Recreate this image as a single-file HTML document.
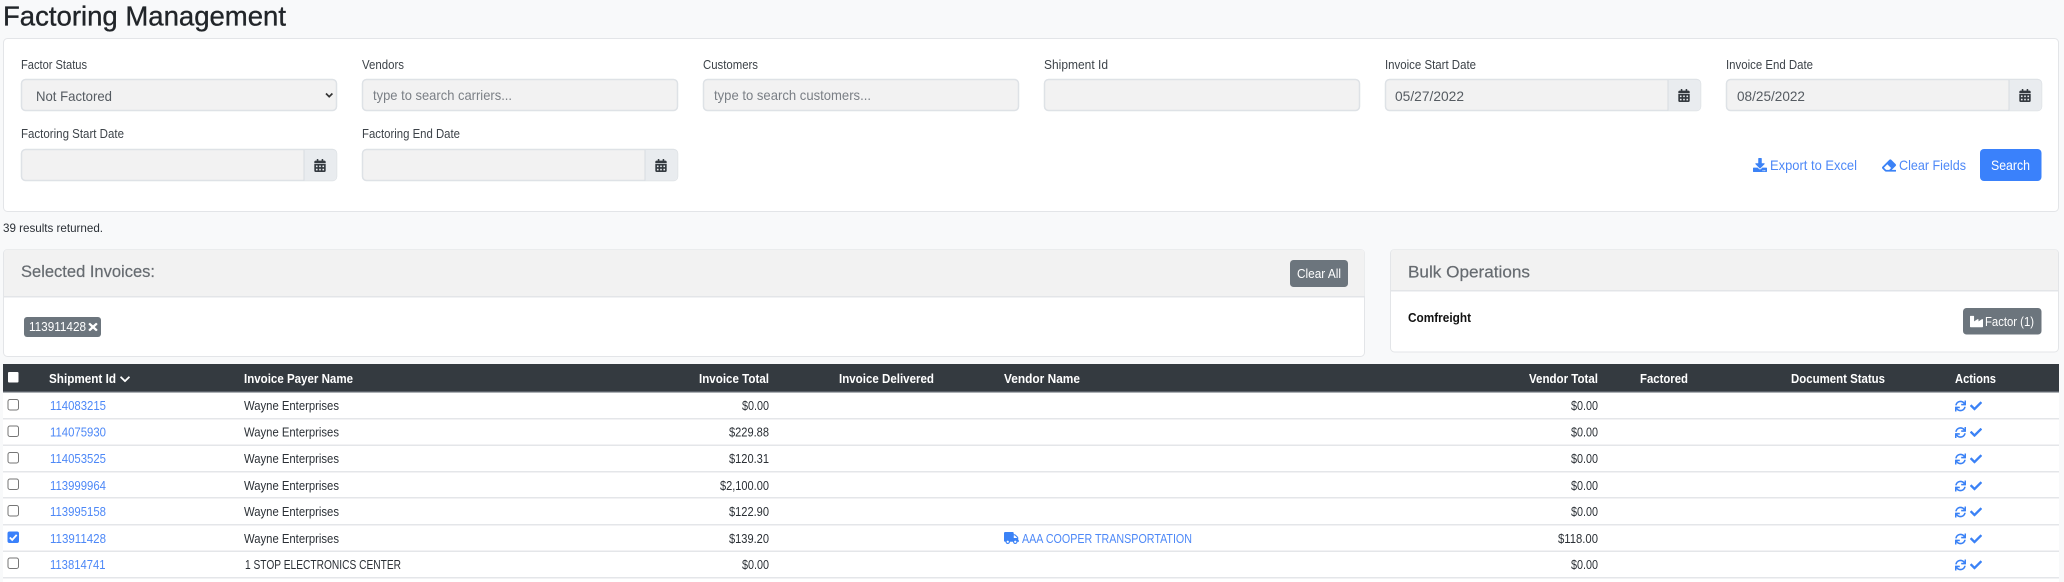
<!DOCTYPE html>
<html lang="en"><head><meta charset="utf-8"><title>Factoring Management</title>
<style>
html,body{margin:0;padding:0;width:2064px;height:582px;overflow:hidden;background:#f8f9fa}
svg{display:block}
text{font-family:"Liberation Sans",sans-serif;font-size:12.8px;fill:#2b3036}
.lb{fill:#3d4349}
.ph{fill:#7a7f85;font-size:14px}
.v{fill:#555b61;font-size:14px}
.h{fill:#fff;font-weight:bold;font-size:12.6px}
.a{fill:#4d88f7}
.ct{fill:#666b70;font-size:17px;stroke:#666b70;stroke-width:.2px}
.w{fill:#fff}
.in{fill:#f2f2f2;stroke:#dee2e6;stroke-width:1.5}
.ad{fill:#e9ecef}
.ln{fill:#e4e6e9}
.cb{fill:#fff;stroke:#767676;stroke-width:1}
</style></head><body>
<svg width="2064" height="582" viewBox="0 0 2064 582" xmlns="http://www.w3.org/2000/svg">
<defs>
<symbol id="cal" viewBox="0 0 448 512"><path fill="#343a40" d="M0 464c0 26.5 21.5 48 48 48h352c26.5 0 48-21.5 48-48V192H0v272zm320-196c0-6.6 5.4-12 12-12h40c6.6 0 12 5.4 12 12v40c0 6.6-5.4 12-12 12h-40c-6.6 0-12-5.4-12-12v-40zm0 128c0-6.6 5.4-12 12-12h40c6.6 0 12 5.4 12 12v40c0 6.6-5.4 12-12 12h-40c-6.6 0-12-5.4-12-12v-40zM192 268c0-6.6 5.4-12 12-12h40c6.6 0 12 5.4 12 12v40c0 6.6-5.4 12-12 12h-40c-6.6 0-12-5.4-12-12v-40zm0 128c0-6.6 5.4-12 12-12h40c6.6 0 12 5.4 12 12v40c0 6.6-5.4 12-12 12h-40c-6.6 0-12-5.4-12-12v-40zM64 268c0-6.6 5.4-12 12-12h40c6.6 0 12 5.4 12 12v40c0 6.6-5.4 12-12 12H76c-6.6 0-12-5.4-12-12v-40zm0 128c0-6.6 5.4-12 12-12h40c6.6 0 12 5.4 12 12v40c0 6.6-5.4 12-12 12H76c-6.6 0-12-5.4-12-12v-40zM400 64h-48V16c0-8.8-7.2-16-16-16h-32c-8.8 0-16 7.2-16 16v48H160V16c0-8.8-7.2-16-16-16h-32c-8.8 0-16 7.2-16 16v48H48C21.5 64 0 85.5 0 112v48h448v-48c0-26.5-21.5-48-48-48z"/></symbol>
<symbol id="sync" viewBox="0 0 512 512"><path fill="#3b82f6" d="M440.65 12.57l4 82.77A247.16 247.16 0 0 0 255.83 8C134.73 8 33.91 94.92 12.29 209.82A12 12 0 0 0 24.09 224h49.05a12 12 0 0 0 11.67-9.26 175.91 175.91 0 0 1 317-56.94l-101.46-4.86a12 12 0 0 0-12.57 12v47.41a12 12 0 0 0 12 12H500a12 12 0 0 0 12-12V12a12 12 0 0 0-12-12h-47.37a12 12 0 0 0-11.98 12.57zM255.83 432a175.61 175.61 0 0 1-146-77.8l101.8 4.87a12 12 0 0 0 12.57-12v-47.4a12 12 0 0 0-12-12H12a12 12 0 0 0-12 12V500a12 12 0 0 0 12 12h47.35a12 12 0 0 0 12-12.6l-4.15-82.57A247.17 247.17 0 0 0 255.83 504c121.11 0 221.93-86.92 243.55-201.82a12 12 0 0 0-11.8-14.18h-49.05a12 12 0 0 0-11.67 9.26A175.86 175.86 0 0 1 255.83 432z"/></symbol>
<symbol id="chk" viewBox="0 0 512 512"><path fill="#3b82f6" d="M173.898 439.404l-166.4-166.4c-9.997-9.997-9.997-26.206 0-36.204l36.203-36.204c9.997-9.998 26.207-9.998 36.204 0L192 312.69 432.095 72.596c9.997-9.997 26.207-9.997 36.204 0l36.203 36.204c9.997 9.997 9.997 26.206 0 36.204l-294.4 294.401c-9.998 9.997-26.207 9.997-36.204-.001z"/></symbol>
<symbol id="acts" viewBox="0 0 27 12"><use href="#sync" x="0" y="0.500" width="11" height="11"/><use href="#chk" x="15" y="0" width="12" height="12"/></symbol>
</defs>

<!-- title -->
<text x="3" y="25.500" style="font-size:28px;fill:#212529;stroke:#212529;stroke-width:.35px" textLength="283" lengthAdjust="spacingAndGlyphs">Factoring Management</text>

<!-- filter card -->
<rect x="3.500" y="38.500" width="2055" height="173" rx="4" fill="#fff" stroke="#e3e5e8"/>

<text class="lb" x="21" y="69" textLength="66" lengthAdjust="spacingAndGlyphs">Factor Status</text>
<text class="lb" x="362" y="69" textLength="42" lengthAdjust="spacingAndGlyphs">Vendors</text>
<text class="lb" x="703" y="69" textLength="55" lengthAdjust="spacingAndGlyphs">Customers</text>
<text class="lb" x="1044" y="69" textLength="64" lengthAdjust="spacingAndGlyphs">Shipment Id</text>
<text class="lb" x="1385" y="69" textLength="91" lengthAdjust="spacingAndGlyphs">Invoice Start Date</text>
<text class="lb" x="1726" y="69" textLength="87" lengthAdjust="spacingAndGlyphs">Invoice End Date</text>
<text class="lb" x="21" y="138" textLength="103" lengthAdjust="spacingAndGlyphs">Factoring Start Date</text>
<text class="lb" x="362" y="138" textLength="98" lengthAdjust="spacingAndGlyphs">Factoring End Date</text>

<rect class="in" x="21.500" y="79.500" width="315" height="31" rx="4"/>
<text class="v" x="36" y="101" textLength="76" lengthAdjust="spacingAndGlyphs">Not Factored</text>
<path d="M326 93.500l3.200 3.200 3.200-3.200" fill="none" stroke="#333" stroke-width="1.700"/>

<rect class="in" x="362.500" y="79.500" width="315" height="31" rx="4"/>
<text class="ph" x="373" y="100" textLength="139" lengthAdjust="spacingAndGlyphs">type to search carriers...</text>
<rect class="in" x="703.500" y="79.500" width="315" height="31" rx="4"/>
<text class="ph" x="714" y="100" textLength="157" lengthAdjust="spacingAndGlyphs">type to search customers...</text>
<rect class="in" x="1044.500" y="79.500" width="315" height="31" rx="4"/>

<!-- date inputs row 1 -->
<rect class="in" x="1385.500" y="79.500" width="315" height="31" rx="4"/>
<path class="ad" d="M1668 80h29a3.500 3.500 0 0 1 3.500 3.500v23.500a3.500 3.500 0 0 1-3.500 3.500h-29z"/>
<rect x="1667.500" y="80" width="1" height="30.500" fill="#d8dce0"/>
<text class="v" x="1395" y="101" textLength="69" lengthAdjust="spacingAndGlyphs">05/27/2022</text>
<use href="#cal" x="1678" y="89" width="12" height="13"/>

<rect class="in" x="1726.500" y="79.500" width="315" height="31" rx="4"/>
<path class="ad" d="M2009 80h29a3.500 3.500 0 0 1 3.500 3.500v23.500a3.500 3.500 0 0 1-3.500 3.500h-29z"/>
<rect x="2008.500" y="80" width="1" height="30.500" fill="#d8dce0"/>
<text class="v" x="1737" y="101" textLength="68" lengthAdjust="spacingAndGlyphs">08/25/2022</text>
<use href="#cal" x="2019" y="89" width="12" height="13"/>

<!-- date inputs row 2 -->
<rect class="in" x="21.500" y="149.500" width="315" height="31" rx="4"/>
<path class="ad" d="M304 150h29a3.500 3.500 0 0 1 3.500 3.500v23.500a3.500 3.500 0 0 1-3.500 3.500h-29z"/>
<rect x="303.500" y="150" width="1" height="30.500" fill="#d8dce0"/>
<use href="#cal" x="314" y="159" width="12" height="13"/>

<rect class="in" x="362.500" y="149.500" width="315" height="31" rx="4"/>
<path class="ad" d="M645 150h29a3.500 3.500 0 0 1 3.500 3.500v23.500a3.500 3.500 0 0 1-3.500 3.500h-29z"/>
<rect x="644.500" y="150" width="1" height="30.500" fill="#d8dce0"/>
<use href="#cal" x="655" y="159" width="12" height="13"/>

<!-- actions -->
<svg x="1753" y="158" width="14" height="14" viewBox="0 0 512 512"><path fill="#3b82f6" d="M216 0h80c13.300 0 24 10.700 24 24v168h87.700c17.800 0 26.700 21.500 14.100 34.100L269.700 378.300c-7.500 7.500-19.800 7.500-27.300 0L90.100 226.100c-12.600-12.600-3.700-34.100 14.100-34.100H192V24c0-13.300 10.700-24 24-24zm296 376v112c0 13.300-10.700 24-24 24H24c-13.300 0-24-10.700-24-24V376c0-13.300 10.700-24 24-24h146.700l49 49c20.100 20.100 52.500 20.100 72.600 0l49-49H488c13.300 0 24 10.700 24 24zm-124 88c0-11-9-20-20-20s-20 9-20 20 9 20 20 20 20-9 20-20zm64 0c0-11-9-20-20-20s-20 9-20 20 9 20 20 20 20-9 20-20z"/></svg>
<text class="a" x="1770" y="170" style="font-size:14px" textLength="87" lengthAdjust="spacingAndGlyphs">Export to Excel</text>
<svg x="1882" y="158.500" width="14" height="14" viewBox="0 0 512 512"><path fill="#3b82f6" d="M497.941 273.941c18.745-18.745 18.745-49.137 0-67.882l-160-160c-18.745-18.745-49.136-18.746-67.883 0l-256 256c-18.745 18.745-18.745 49.137 0 67.882l96 96A48.004 48.004 0 0 0 144 480h356c6.627 0 12-5.373 12-12v-40c0-6.627-5.373-12-12-12H355.883l142.058-142.059zm-302.627-62.627l137.373 137.373L265.373 416H150.628l-80-80 124.686-124.686z"/></svg>
<text class="a" x="1899" y="170" style="font-size:14px" textLength="67" lengthAdjust="spacingAndGlyphs">Clear Fields</text>
<rect x="1980" y="149" width="61.500" height="32" rx="4" fill="#3a81fb"/>
<text class="w" x="1991" y="170" style="font-size:14px" textLength="39" lengthAdjust="spacingAndGlyphs">Search</text>

<text x="3" y="232" style="font-size:12px" textLength="100" lengthAdjust="spacingAndGlyphs">39 results returned.</text>

<!-- selected invoices card -->
<rect x="3.500" y="249.500" width="1361" height="107" rx="4" fill="#fff" stroke="#e3e5e8"/>
<path d="M4 296.500V253a3.500 3.500 0 0 1 3.500-3.500h1353.500a3.500 3.500 0 0 1 3.500 3.500v43.500z" fill="#f2f2f2"/>
<rect x="4" y="296" width="1360.500" height="1.500" fill="#e3e5e8"/>
<text class="ct" x="21" y="277" textLength="134" lengthAdjust="spacingAndGlyphs">Selected Invoices:</text>
<rect x="1290" y="260" width="58" height="27" rx="3.500" fill="#6c757d"/>
<text class="w" x="1297" y="278" textLength="44" lengthAdjust="spacingAndGlyphs">Clear All</text>
<rect x="24" y="317" width="77" height="20" rx="3" fill="#6c757d"/>
<text class="w" x="29" y="331" textLength="57" lengthAdjust="spacingAndGlyphs">113911428</text>
<svg x="88.500" y="321" width="9" height="12" viewBox="0 0 352 512" preserveAspectRatio="none"><path fill="#fff" d="M242.720 256l100.070-100.070c12.280-12.280 12.280-32.190 0-44.480l-22.240-22.240c-12.280-12.280-32.190-12.280-44.480 0L176 189.280 75.930 89.210c-12.280-12.280-32.190-12.280-44.480 0L9.210 111.450c-12.280 12.280-12.280 32.190 0 44.480L109.280 256 9.210 356.070c-12.280 12.280-12.280 32.190 0 44.480l22.240 22.240c12.280 12.280 32.200 12.280 44.480 0L176 322.720l100.070 100.070c12.280 12.280 32.200 12.280 44.480 0l22.240-22.240c12.280-12.280 12.280-32.190 0-44.480L242.720 256z"/></svg>

<!-- bulk card -->
<rect x="1390.500" y="249.500" width="668" height="102.500" rx="4" fill="#fff" stroke="#e3e5e8"/>
<path d="M1391 290.500V253a3.500 3.500 0 0 1 3.500-3.500h660a3.500 3.500 0 0 1 3.500 3.500v37.500z" fill="#f2f2f2"/>
<rect x="1391" y="290" width="667" height="1.500" fill="#e3e5e8"/>
<text class="ct" x="1408" y="277.500" textLength="122" lengthAdjust="spacingAndGlyphs">Bulk Operations</text>
<text x="1408" y="322" style="font-weight:bold;fill:#111" textLength="63" lengthAdjust="spacingAndGlyphs">Comfreight</text>
<rect x="1963" y="308" width="78.500" height="26.500" rx="3.500" fill="#6c757d"/>
<svg x="1970" y="315" width="13" height="13" viewBox="0 0 512 512"><path fill="#fff" d="M475.115 163.781L336 252.309v-68.280c0-18.916-20.931-30.399-36.885-20.248L160 252.309V56c0-13.255-10.745-24-24-24H24C10.745 32 0 42.745 0 56v400c0 13.255 10.745 24 24 24h464c13.255 0 24-10.745 24-24V184.029c0-18.917-20.931-30.399-36.885-20.248z"/></svg>
<text class="w" x="1985" y="326" textLength="49" lengthAdjust="spacingAndGlyphs">Factor (1)</text>

<!-- table -->
<rect x="3" y="392" width="2056" height="190" fill="#fff"/>
<rect x="3" y="364" width="2056" height="28" fill="#343a40"/>
<rect x="3" y="391" width="2056" height="1.500" fill="#5a6068"/>
<rect x="8" y="372" width="10.500" height="10.500" rx="1" fill="#fff"/>
<text class="h" x="49" y="383" textLength="67" lengthAdjust="spacingAndGlyphs">Shipment Id</text>
<svg x="120" y="373.500" width="10" height="11.500" viewBox="0 0 448 512"><path fill="#fff" d="M207.029 381.476L12.686 187.132c-9.373-9.373-9.373-24.569 0-33.941l22.667-22.667c9.357-9.357 24.522-9.375 33.901-.04L224 284.505l154.745-154.021c9.379-9.335 24.544-9.317 33.901.04l22.667 22.667c9.373 9.373 9.373 24.569 0 33.941L240.971 381.476c-9.373 9.372-24.569 9.372-33.942 0z"/></svg>
<text class="h" x="244" y="383" textLength="109" lengthAdjust="spacingAndGlyphs">Invoice Payer Name</text>
<text class="h" x="699" y="383" textLength="70" lengthAdjust="spacingAndGlyphs">Invoice Total</text>
<text class="h" x="839" y="383" textLength="95" lengthAdjust="spacingAndGlyphs">Invoice Delivered</text>
<text class="h" x="1004" y="383" textLength="76" lengthAdjust="spacingAndGlyphs">Vendor Name</text>
<text class="h" x="1529" y="383" textLength="69" lengthAdjust="spacingAndGlyphs">Vendor Total</text>
<text class="h" x="1640" y="383" textLength="48" lengthAdjust="spacingAndGlyphs">Factored</text>
<text class="h" x="1791" y="383" textLength="94" lengthAdjust="spacingAndGlyphs">Document Status</text>
<text class="h" x="1955" y="383" textLength="41" lengthAdjust="spacingAndGlyphs">Actions</text>

<rect class="ln" x="3" y="418" width="2056" height="1.500"/>
<rect class="ln" x="3" y="444.500" width="2056" height="1.500"/>
<rect class="ln" x="3" y="471" width="2056" height="1.500"/>
<rect class="ln" x="3" y="497" width="2056" height="1.500"/>
<rect class="ln" x="3" y="524" width="2056" height="1.500"/>
<rect class="ln" x="3" y="550.500" width="2056" height="1.500"/>
<rect class="ln" x="3" y="577" width="2056" height="1.500"/>

<!-- row 1 -->
<rect class="cb" x="8" y="399.500" width="10.500" height="10.500" rx="2"/>
<text class="a" x="50" y="410" textLength="56" lengthAdjust="spacingAndGlyphs">114083215</text>
<text x="244" y="410" textLength="95" lengthAdjust="spacingAndGlyphs">Wayne Enterprises</text>
<text x="742" y="410" textLength="27" lengthAdjust="spacingAndGlyphs">$0.00</text>
<text x="1571" y="410" textLength="27" lengthAdjust="spacingAndGlyphs">$0.00</text>
<use href="#acts" x="1955" y="400" width="27" height="12"/>
<!-- row 2 -->
<rect class="cb" x="8" y="426" width="10.500" height="10.500" rx="2"/>
<text class="a" x="50" y="436.500" textLength="56" lengthAdjust="spacingAndGlyphs">114075930</text>
<text x="244" y="436.500" textLength="95" lengthAdjust="spacingAndGlyphs">Wayne Enterprises</text>
<text x="729" y="436.500" textLength="40" lengthAdjust="spacingAndGlyphs">$229.88</text>
<text x="1571" y="436.500" textLength="27" lengthAdjust="spacingAndGlyphs">$0.00</text>
<use href="#acts" x="1955" y="426.500" width="27" height="12"/>
<!-- row 3 -->
<rect class="cb" x="8" y="452.500" width="10.500" height="10.500" rx="2"/>
<text class="a" x="50" y="463" textLength="56" lengthAdjust="spacingAndGlyphs">114053525</text>
<text x="244" y="463" textLength="95" lengthAdjust="spacingAndGlyphs">Wayne Enterprises</text>
<text x="729" y="463" textLength="40" lengthAdjust="spacingAndGlyphs">$120.31</text>
<text x="1571" y="463" textLength="27" lengthAdjust="spacingAndGlyphs">$0.00</text>
<use href="#acts" x="1955" y="453" width="27" height="12"/>
<!-- row 4 -->
<rect class="cb" x="8" y="479" width="10.500" height="10.500" rx="2"/>
<text class="a" x="50" y="490" textLength="56" lengthAdjust="spacingAndGlyphs">113999964</text>
<text x="244" y="490" textLength="95" lengthAdjust="spacingAndGlyphs">Wayne Enterprises</text>
<text x="720" y="490" textLength="49" lengthAdjust="spacingAndGlyphs">$2,100.00</text>
<text x="1571" y="490" textLength="27" lengthAdjust="spacingAndGlyphs">$0.00</text>
<use href="#acts" x="1955" y="480" width="27" height="12"/>
<!-- row 5 -->
<rect class="cb" x="8" y="505.500" width="10.500" height="10.500" rx="2"/>
<text class="a" x="50" y="516" textLength="56" lengthAdjust="spacingAndGlyphs">113995158</text>
<text x="244" y="516" textLength="95" lengthAdjust="spacingAndGlyphs">Wayne Enterprises</text>
<text x="729" y="516" textLength="40" lengthAdjust="spacingAndGlyphs">$122.90</text>
<text x="1571" y="516" textLength="27" lengthAdjust="spacingAndGlyphs">$0.00</text>
<use href="#acts" x="1955" y="506" width="27" height="12"/>
<!-- row 6 -->
<rect x="7.500" y="531.500" width="11.500" height="11.500" rx="2" fill="#3a81fb"/>
<path d="M9.800 537.500l2.400 2.400 4.500-5" fill="none" stroke="#fff" stroke-width="1.800"/>
<text class="a" x="50" y="543" textLength="56" lengthAdjust="spacingAndGlyphs">113911428</text>
<text x="244" y="543" textLength="95" lengthAdjust="spacingAndGlyphs">Wayne Enterprises</text>
<text x="729" y="543" textLength="40" lengthAdjust="spacingAndGlyphs">$139.20</text>
<svg x="1004" y="532" width="15" height="12" viewBox="0 0 640 512"><path fill="#3b82f6" d="M624 352h-16V243.900c0-12.700-5.100-24.900-14.100-33.900L494 110.100c-9-9-21.200-14.100-33.900-14.100H416V48c0-26.500-21.500-48-48-48H48C21.500 0 0 21.500 0 48v320c0 26.500 21.500 48 48 48h16c0 53 43 96 96 96s96-43 96-96h128c0 53 43 96 96 96s96-43 96-96h48c8.800 0 16-7.200 16-16v-32c0-8.800-7.200-16-16-16zM160 464c-26.500 0-48-21.500-48-48s21.500-48 48-48 48 21.500 48 48-21.500 48-48 48zm320 0c-26.500 0-48-21.500-48-48s21.500-48 48-48 48 21.500 48 48-21.500 48-48 48zm80-208H416V144h44.100l99.900 99.900V256z"/></svg>
<text class="a" x="1022" y="543" textLength="170" lengthAdjust="spacingAndGlyphs">AAA COOPER TRANSPORTATION</text>
<text x="1558" y="543" textLength="40" lengthAdjust="spacingAndGlyphs">$118.00</text>
<use href="#acts" x="1955" y="533" width="27" height="12"/>
<!-- row 7 -->
<rect class="cb" x="8" y="558" width="10.500" height="10.500" rx="2"/>
<text class="a" x="50" y="569" textLength="55.500" lengthAdjust="spacingAndGlyphs">113814741</text>
<text x="245" y="569" textLength="156" lengthAdjust="spacingAndGlyphs">1 STOP ELECTRONICS CENTER</text>
<text x="742" y="569" textLength="27" lengthAdjust="spacingAndGlyphs">$0.00</text>
<text x="1571" y="569" textLength="27" lengthAdjust="spacingAndGlyphs">$0.00</text>
<use href="#acts" x="1955" y="559" width="27" height="12"/>
</svg>
</body></html>
